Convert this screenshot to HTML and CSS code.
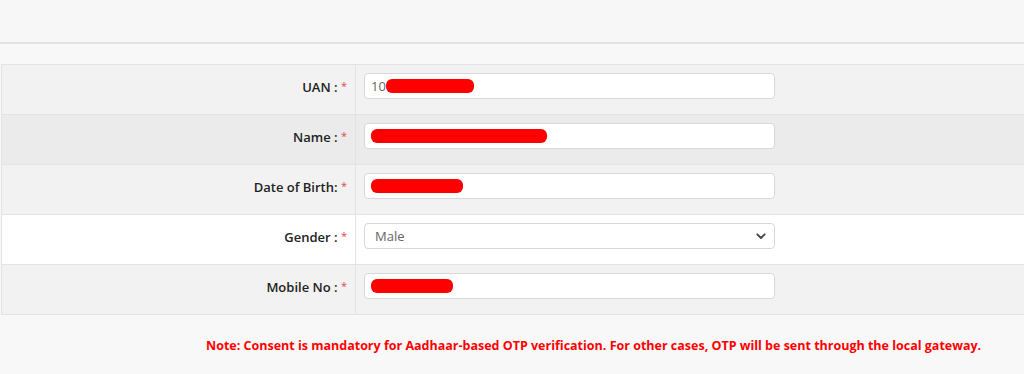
FILE: index.html
```html
<!DOCTYPE html>
<html lang="en">
<head>
    <meta charset="UTF-8">
    <meta name="viewport" content="width=device-width, initial-scale=1.0">
    <title>Member Details</title>
    <link rel="stylesheet" href="styles.css">
</head>
<body>
    <header class="top-bar"></header>
    <main class="content">
        <table class="details">
            <tr class="row-a">
                <th>UAN : <span class="req">*</span></th>
                <td><div class="field"><span class="val">10</span><span class="mask" style="width:88px"></span></div></td>
            </tr>
            <tr class="row-b">
                <th>Name : <span class="req">*</span></th>
                <td><div class="field"><span class="mask" style="width:176px"></span></div></td>
            </tr>
            <tr class="row-a">
                <th>Date of Birth: <span class="req">*</span></th>
                <td><div class="field"><span class="mask" style="width:92px"></span></div></td>
            </tr>
            <tr class="row-w">
                <th>Gender : <span class="req">*</span></th>
                <td>
                    <div class="field select">
                        <span class="val">Male</span>
                        <svg class="caret" width="10" height="7" viewBox="0 0 10 7"><path d="M1.3 1.3 L5 5 L8.7 1.3" fill="none" stroke="#444" stroke-width="1.8" stroke-linecap="round" stroke-linejoin="round"/></svg>
                    </div>
                </td>
            </tr>
            <tr class="row-a">
                <th>Mobile No : <span class="req">*</span></th>
                <td><div class="field"><span class="mask" style="width:82px"></span></div></td>
            </tr>
        </table>
        <p class="note">Note: Consent is mandatory for Aadhaar-based OTP verification. For other cases, OTP will be sent through the local gateway.</p>
    </main>
</body>
</html>
```

FILE: styles.css
```css
:root {
    --page-bg: #f8f8f8;
    --row-light: #f2f2f2;
    --row-dark: #ebebeb;
    --line: #e1e4e7;
    --label: #222222;
    --font-family: 'Open Sans', 'Liberation Sans', sans-serif;
}
body {
    margin: 0;
    background-color: var(--page-bg);
    font-family: var(--font-family);
    overflow: hidden;
}
.top-bar {
    height: 42px;
    background-color: #f7f7f7;
    border-bottom: 2px solid #e2e2e2;
}
.content {
    padding-top: 20px;
    padding-left: 1px;
}
.details {
    width: 1040px;
    border-collapse: collapse;
    border-top: 1px solid var(--line);
    border-left: 1px solid var(--line);
}
.details tr {
    height: 50px;
    border-bottom: 1px solid var(--line);
}
.details th {
    width: 354px;
    padding: 13px 8px 0 0;
    text-align: right;
    font-size: 13px;
    font-weight: 600;
    color: var(--label);
    border-right: 1px solid var(--line);
    vertical-align: top;
    box-sizing: border-box;
}
.details td {
    padding: 8px 0 0 8px;
    vertical-align: top;
}
.row-a { background-color: var(--row-light); }
.row-b { background-color: var(--row-dark); }
.row-w { background-color: #ffffff; }
.req {
    color: #e0484f;
    font-size: 11px;
    font-weight: 400;
    vertical-align: 2px;
}
.field {
    width: 403px;
    height: 24px;
    background: #ffffff;
    border: 1px solid #d8d8d8;
    border-radius: 4px;
    display: flex;
    align-items: center;
    padding-left: 6px;
    font-size: 13px;
    color: #666666;
}
.mask {
    display: inline-block;
    height: 14px;
    background: #ff0000;
    border-radius: 6px;
}
.select {
    justify-content: space-between;
    padding-left: 10px;
    padding-right: 8px;
    width: 391px;
}
.caret {
    display: block;
}
.note {
    margin: 22px 0 0 205px;
    font-size: 12.5px;
    font-weight: 700;
    color: #ff0000;
}
```
